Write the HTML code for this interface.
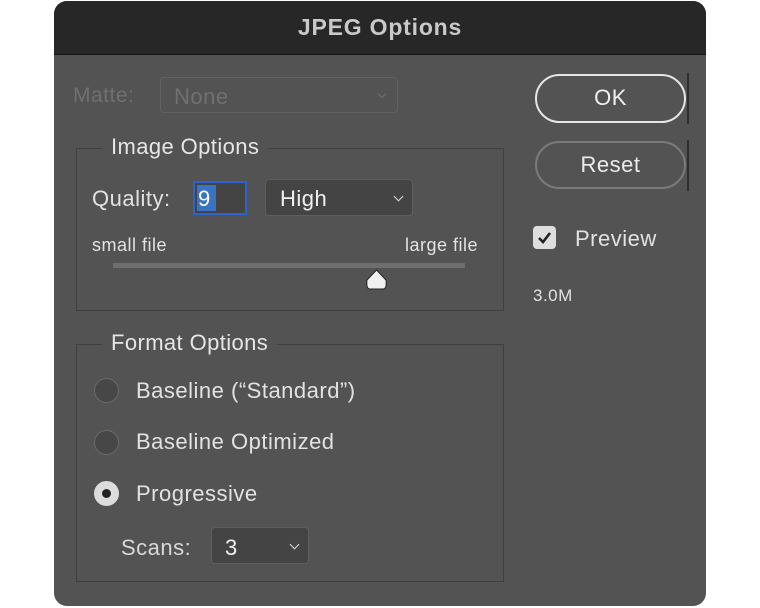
<!DOCTYPE html>
<html><head><style>
*{margin:0;padding:0;box-sizing:border-box}
body{width:760px;height:608px;background:#fff;position:relative;overflow:hidden;font-family:"Liberation Sans",sans-serif}
.dlg{position:absolute;left:54px;top:1px;width:652px;height:605px;background:#535353;border-radius:13px;overflow:hidden}
.title{position:absolute;left:0;top:0;width:100%;height:54px;background:#272727;border-bottom:1px solid #141414;color:#c9c9c9;font-weight:bold;font-size:23px;letter-spacing:0.8px;text-align:center;line-height:52px}
.a{position:absolute}
.t{position:absolute;color:#e2e2e2;font-size:22px;letter-spacing:0.5px;white-space:nowrap}
.box{position:absolute;border:1px solid #3f3f3f}
.leg{position:absolute;background:#535353;padding:0 9px;color:#e6e6e6;font-size:22px;letter-spacing:0.4px}
.sel{position:absolute;background:#444;border:1px solid #5e5e5e;border-radius:4px}
.chev{position:absolute;width:7px;height:7px;border-right:1.5px solid #ddd;border-bottom:1.5px solid #ddd;transform:rotate(45deg)}
.rad{position:absolute;width:25px;height:25px;border-radius:50%;background:#474747;border:1px solid #6a6a6a}
</style></head><body>
<div class="dlg">
<div class="title">JPEG Options</div>
</div>
<div class="t" style="left:73px;top:84px;color:#707070;font-size:21px">Matte:</div>
<div class="sel" style="left:160px;top:77px;width:238px;height:36px;background:#535353;border-color:#626262"></div>
<div class="t" style="left:174px;top:84px;color:#707070;font-size:22px">None</div>
<div class="chev" style="left:379px;top:91px;border-color:#707070;width:6px;height:6px"></div>

<div class="box" style="left:76px;top:148px;width:428px;height:163px"></div>
<div class="leg" style="left:102px;top:134px">Image Options</div>
<div class="t" style="left:92px;top:186px">Quality:</div>
<div class="a" style="left:193px;top:181px;width:54px;height:34px;border:2px solid #2b63d0;background:#444"></div>
<div class="a" style="left:197px;top:185px;width:19px;height:26px;background:#3a73c2"></div>
<div class="t" style="left:198px;top:186px;color:#fff">9</div>
<div class="sel" style="left:265px;top:179px;width:148px;height:37px"></div>
<div class="t" style="left:280px;top:186px;color:#f0f0f0">High</div>
<div class="chev" style="left:395px;top:193px"></div>
<div class="t" style="left:92px;top:235px;font-size:18px">small file</div>
<div class="t" style="left:405px;top:235px;font-size:18px">large file</div>
<div class="a" style="left:113px;top:263px;width:352px;height:5px;background:#6e6e6e"></div>
<svg class="a" style="left:365px;top:268px" width="24" height="24"><path d="M11.5 2 L21 12 Q22 21 18 21 H5 Q1 21 2 12 Z" fill="#f0f0f0" stroke="#222" stroke-width="1"/></svg>

<div class="box" style="left:76px;top:344px;width:428px;height:238px"></div>
<div class="leg" style="left:102px;top:330px">Format Options</div>
<div class="rad" style="left:94px;top:378px"></div>
<div class="t" style="left:136px;top:378px">Baseline (“Standard”)</div>
<div class="rad" style="left:94px;top:430px"></div>
<div class="t" style="left:136px;top:429px">Baseline Optimized</div>
<div class="rad" style="left:94px;top:481px;background:#dcdcdc;border-color:#dcdcdc"></div>
<div class="a" style="left:102px;top:489px;width:9px;height:9px;border-radius:50%;background:#222"></div>
<div class="t" style="left:136px;top:481px">Progressive</div>
<div class="t" style="left:121px;top:535px;color:#d8d8d8">Scans:</div>
<div class="sel" style="left:211px;top:527px;width:98px;height:37px"></div>
<div class="t" style="left:225px;top:535px;color:#f0f0f0">3</div>
<div class="chev" style="left:291px;top:541px"></div>

<div class="a" style="left:535px;top:74px;width:151px;height:49px;border:2px solid #e6e6e6;border-radius:25px"></div>
<div class="t" style="left:535px;top:85px;width:151px;text-align:center;font-size:22px;color:#f0f0f0">OK</div>
<div class="a" style="left:687px;top:73px;width:2px;height:51px;background:#2e2e2e"></div>
<div class="a" style="left:535px;top:141px;width:151px;height:48px;border:2px solid #7a7a7a;border-radius:25px"></div>
<div class="t" style="left:535px;top:152px;width:151px;text-align:center;font-size:22px;color:#ececec">Reset</div>
<div class="a" style="left:687px;top:140px;width:2px;height:51px;background:#2e2e2e"></div>
<div class="a" style="left:533px;top:226px;width:23px;height:23px;background:#dedede;border-radius:4px"></div>
<svg class="a" style="left:533px;top:226px" width="23" height="23"><path d="M6 12 L10 16 L17 7" fill="none" stroke="#222" stroke-width="2.6"/></svg>
<div class="t" style="left:575px;top:226px">Preview</div>
<div class="t" style="left:533px;top:286px;font-size:17px">3.0M</div>
</body></html>
